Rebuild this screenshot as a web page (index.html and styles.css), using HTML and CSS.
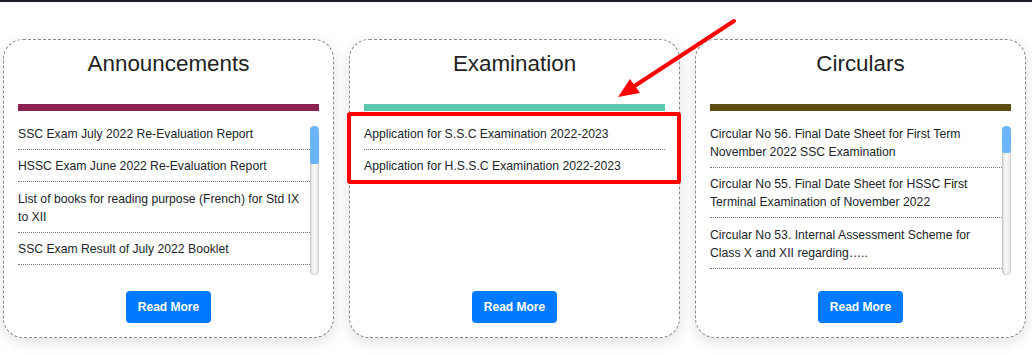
FILE: index.html
```html
<!DOCTYPE html>
<html lang="en">
<head>
    <meta charset="UTF-8">
    <meta name="viewport" content="width=device-width, initial-scale=1.0">
    <title>Notice Board</title>
    <link rel="stylesheet" href="styles.css">
</head>
<body>
    <div class="topbar"></div>

    <div class="boards">
        <div class="board">
            <h2 class="board-title">Announcements</h2>
            <div class="board-line line-ann"></div>
            <div class="board-body">
                <ul class="board-list">
                    <li>SSC Exam July 2022 Re-Evaluation Report</li>
                    <li>HSSC Exam June 2022 Re-Evaluation Report</li>
                    <li>List of books for reading purpose (French) for Std IX to XII</li>
                    <li>SSC Exam Result of July 2022 Booklet</li>
                </ul>
                <div class="scrollbar"><div class="scroll-thumb thumb-ann"></div></div>
            </div>
            <a class="btn-more" href="#">Read More</a>
        </div>

        <div class="board">
            <h2 class="board-title">Examination</h2>
            <div class="board-line line-exam"></div>
            <div class="board-body">
                <ul class="board-list">
                    <li>Application for S.S.C Examination 2022-2023</li>
                    <li>Application for H.S.S.C Examination 2022-2023</li>
                </ul>
            </div>
            <a class="btn-more" href="#">Read More</a>
            <div class="highlight"></div>
        </div>

        <div class="board">
            <h2 class="board-title">Circulars</h2>
            <div class="board-line line-circ"></div>
            <div class="board-body">
                <ul class="board-list">
                    <li>Circular No 56. Final Date Sheet for First Term November 2022 SSC Examination</li>
                    <li>Circular No 55. Final Date Sheet for HSSC First Terminal Examination of November 2022</li>
                    <li>Circular No 53. Internal Assessment Scheme for Class X and XII regarding…..</li>
                </ul>
                <div class="scrollbar"><div class="scroll-thumb thumb-circ"></div></div>
            </div>
            <a class="btn-more" href="#">Read More</a>
        </div>
    </div>

    <svg class="arrow" width="1032" height="120" viewBox="0 0 1032 120">
        <line x1="734" y1="21" x2="633" y2="87" stroke="#ff0000" stroke-width="4" stroke-linecap="round"/>
        <polygon points="618,97 630,79 640,93" fill="#ff0000"/>
    </svg>
</body>
</html>
```

FILE: styles.css
```css
body {
    margin: 0;
    font-family: "Liberation Sans", Arial, sans-serif;
    color: #212529;
    background: #fff;
}
.topbar {
    height: 2px;
    background: #1d1d27;
}
.boards {
    display: grid;
    grid-template-columns: repeat(3, 331px);
    column-gap: 15px;
    padding: 37px 0 17px 3px;
}
.board {
    position: relative;
    box-sizing: border-box;
    height: 299px;
    border: 1px dashed #8a8a8a;
    border-radius: 20px;
    padding: 10px 14px 14px;
    display: flex;
    flex-direction: column;
    background: #fff;
    box-shadow: 0 4px 14px rgba(0,0,0,0.12);
}
.board-title {
    margin: 0 0 26px;
    font-size: 22.4px;
    font-weight: normal;
    line-height: 28px;
    text-align: center;
    color: #222;
}
.board-line {
    height: 7px;
    flex: none;
}
.line-ann { background: #8a2151; }
.line-exam { background: #5cc8b0; }
.line-circ { background: #5e4d13; }

.board-body {
    display: flex;
    height: 158px;
    margin-top: 6px;
    flex: none;
}
.board-list {
    flex: 1;
    list-style: none;
    margin: 0;
    padding: 0;
    overflow: hidden;
}
.board-list li {
    font-size: 12.2px;
    line-height: 18px;
    padding: 7.5px 0 6px;
    border-bottom: 1px dotted #777;
}
.scrollbar {
    width: 9px;
    margin-top: 9px;
    border-radius: 5px;
    background: linear-gradient(to right, #dcdcdc, #fafafa 45%, #e6e6e6);
    box-shadow: inset 0 0 2px rgba(0,0,0,0.35);
}
.scroll-thumb {
    background: #6bb5fa;
    border-radius: 5px 5px 4px 4px;
}
.thumb-ann { height: 38px; }
.thumb-circ { height: 27px; }

.btn-more {
    align-self: center;
    margin-top: 16px;
    width: 85px;
    height: 32px;
    line-height: 32px;
    text-align: center;
    background: #007bff;
    color: #fff;
    font-size: 12px;
    font-weight: bold;
    border-radius: 4px;
    text-decoration: none;
}

/* annotation overlays */
.highlight {
    position: absolute;
    left: -3px;
    top: 72px;
    width: 334px;
    height: 72px;
    box-sizing: border-box;
    border: 4px solid #ff0000;
    border-radius: 3px;
    pointer-events: none;
}
.arrow {
    position: absolute;
    left: 0;
    top: 0;
    pointer-events: none;
}
```
